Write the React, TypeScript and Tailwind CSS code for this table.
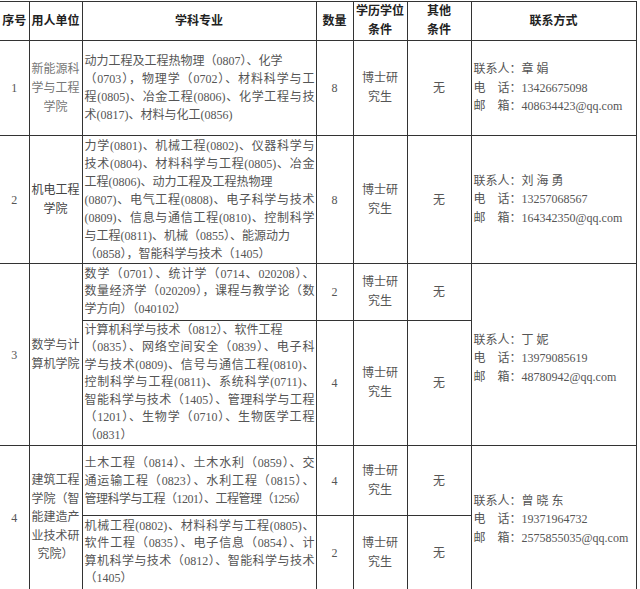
import React from 'react';
import clsx from 'clsx';

type Line = { t: string; full?: boolean; tight?: boolean };

const Subject: React.FC<{ lines: Line[]; leading?: string }> = ({ lines, leading = 'leading-[18px]' }) => (
  <div className={clsx('pl-[2px] pr-[1px] text-[12px]', leading)}>
    {lines.map((l, i) => (
      <div
        key={i}
        className={clsx(
          l.full ? 'text-justify [text-align-last:justify]' : 'whitespace-nowrap',
          l.tight && 'tracking-[-0.5px]'
        )}
      >
        {l.t}
      </div>
    ))}
  </div>
);

const Stack: React.FC<{ lines: string[]; className?: string }> = ({ lines, className }) => (
  <div className={clsx('text-center', className)}>
    {lines.map((l, i) => (
      <div key={i}>{l}</div>
    ))}
  </div>
);

const Contact: React.FC<{ name: string; tel: string; mail: string }> = ({ name, tel, mail }) => (
  <div className="pl-[2px] text-[12px] leading-[18.5px] whitespace-nowrap">
    <div>
      联系人：<span className="tracking-[3px]">{name}</span>
    </div>
    <div>电　话：{tel}</div>
    <div>邮　箱：{mail}</div>
  </div>
);

const td = 'border border-[#333] align-middle p-0';
const degree = <Stack lines={['博士研', '究生']} className="leading-[19px]" />;

export default function App() {
  return (
    <div className="w-[640px] h-[589px] bg-white pt-[1px] font-['Liberation_Serif','Noto_Sans_CJK_SC',serif] text-[12px] text-[#555]">
      <table className="table-fixed border-collapse w-[636px]">
        <colgroup>
          <col className="w-[29px]" />
          <col className="w-[53px]" />
          <col className="w-[234px]" />
          <col className="w-[37px]" />
          <col className="w-[54px]" />
          <col className="w-[64px]" />
          <col className="w-[165px]" />
        </colgroup>
        <tbody>
          <tr className="h-[37px] font-bold text-[#222] text-[12px]">
            <td className={clsx(td, 'border-l-0 text-center')}>序号</td>
            <td className={clsx(td, 'text-center')}>用人单位</td>
            <td className={clsx(td, 'text-center')}>学科专业</td>
            <td className={clsx(td, 'text-center')}>数量</td>
            <td className={td}>
              <Stack lines={['学历学位', '条件']} className="leading-[19px]" />
            </td>
            <td className={td}>
              <Stack lines={['其他', '条件']} className="leading-[19px]" />
            </td>
            <td className={clsx(td, 'text-center')}>联系方式</td>
          </tr>

          <tr className="h-[95px]">
            <td className={clsx(td, 'border-l-0 text-center')}>1</td>
            <td className={td}>
              <Stack lines={['新能源科', '学与工程', '学院']} className="leading-[19px] text-[#777]" />
            </td>
            <td className={td}>
              <Subject
                lines={[
                  { t: '动力工程及工程热物理（0807）、化学' },
                  { t: '（0703），物理学（0702）、材料科学与工', full: true },
                  { t: '程(0805)、冶金工程(0806)、化学工程与技', full: true },
                  { t: '术(0817)、材料与化工(0856)' },
                ]}
              />
            </td>
            <td className={clsx(td, 'text-center')}>8</td>
            <td className={td}>{degree}</td>
            <td className={clsx(td, 'text-center')}>无</td>
            <td className={td}>
              <Contact name="章娟" tel="13426675098" mail="408634423@qq.com" />
            </td>
          </tr>

          <tr className="h-[128px]">
            <td className={clsx(td, 'border-l-0 text-center')}>2</td>
            <td className={td}>
              <Stack lines={['机电工程', '学院']} className="leading-[19px] text-[#444]" />
            </td>
            <td className={td}>
              <Subject
                lines={[
                  { t: '力学(0801)、机械工程(0802)、仪器科学与', full: true },
                  { t: '技术(0804)、材料科学与工程(0805)、冶金', full: true },
                  { t: '工程(0806)、动力工程及工程热物理' },
                  { t: '(0807)、电气工程(0808)、电子科学与技术', full: true },
                  { t: '(0809)、信息与通信工程(0810)、控制科学', full: true },
                  { t: '与工程(0811)、机械（0855）、能源动力' },
                  { t: '（0858），智能科学与技术（1405）' },
                ]}
              />
            </td>
            <td className={clsx(td, 'text-center')}>8</td>
            <td className={td}>{degree}</td>
            <td className={clsx(td, 'text-center')}>无</td>
            <td className={td}>
              <Contact name="刘海勇" tel="13257068567" mail="164342350@qq.com" />
            </td>
          </tr>

          <tr className="h-[57px]">
            <td rowSpan={2} className={clsx(td, 'border-l-0 text-center')}>3</td>
            <td rowSpan={2} className={td}>
              <Stack lines={['数学与计', '算机学院']} className="leading-[19px] text-[#555]" />
            </td>
            <td className={td}>
              <Subject
                leading="leading-[17.5px]"
                lines={[
                  { t: '数学（0701）、统计学（0714、020208）、', full: true },
                  { t: '数量经济学（020209），课程与教学论（数', full: true },
                  { t: '学方向）（040102）' },
                ]}
              />
            </td>
            <td className={clsx(td, 'text-center')}>2</td>
            <td className={td}>{degree}</td>
            <td className={clsx(td, 'text-center')}>无</td>
            <td rowSpan={2} className={td}>
              <div className="pt-[8px]">
                <Contact name="丁妮" tel="13979085619" mail="48780942@qq.com" />
              </div>
            </td>
          </tr>

          <tr className="h-[125px]">
            <td className={td}>
              <Subject
                leading="leading-[17.5px]"
                lines={[
                  { t: '计算机科学与技术（0812）、软件工程' },
                  { t: '（0835）、网络空间安全（0839）、电子科', full: true },
                  { t: '学与技术(0809)、信号与通信工程(0810)、', full: true },
                  { t: '控制科学与工程(0811)、系统科学(0711)、', full: true },
                  { t: '智能科学与技术（1405）、管理科学与工程', full: true },
                  { t: '（1201）、生物学（0710）、生物医学工程', full: true },
                  { t: '（0831）' },
                ]}
              />
            </td>
            <td className={clsx(td, 'text-center')}>4</td>
            <td className={td}>{degree}</td>
            <td className={clsx(td, 'text-center')}>无</td>
          </tr>

          <tr className="h-[70px]">
            <td rowSpan={2} className={clsx(td, 'border-l-0 text-center')}>4</td>
            <td rowSpan={2} className={td}>
              <Stack
                lines={['建筑工程', '学院（智', '能建造产', '业技术研', '究院）']}
                className="leading-[18.5px] text-[#555]"
              />
            </td>
            <td className={td}>
              <Subject
                lines={[
                  { t: '土木工程（0814）、土木水利（0859）、交', full: true },
                  { t: '通运输工程（0823）、水利工程（0815）、', full: true },
                  { t: '管理科学与工程（1201）、工程管理（1256）', tight: true },
                ]}
              />
            </td>
            <td className={clsx(td, 'text-center')}>4</td>
            <td className={td}>{degree}</td>
            <td className={clsx(td, 'text-center')}>无</td>
            <td rowSpan={2} className={td}>
              <div className="pt-[4px]">
                <Contact name="曾晓东" tel="19371964732" mail="2575855035@qq.com" />
              </div>
            </td>
          </tr>

          <tr className="h-[74px]">
            <td className={td}>
              <Subject
                leading="leading-[17.5px]"
                lines={[
                  { t: '机械工程(0802)、材料科学与工程(0805)、', full: true },
                  { t: '软件工程（0835）、电子信息（0854）、计', full: true },
                  { t: '算机科学与技术（0812）、智能科学与技术', full: true },
                  { t: '（1405）' },
                ]}
              />
            </td>
            <td className={clsx(td, 'text-center')}>2</td>
            <td className={td}>{degree}</td>
            <td className={clsx(td, 'text-center')}>无</td>
          </tr>
        </tbody>
      </table>
    </div>
  );
}
